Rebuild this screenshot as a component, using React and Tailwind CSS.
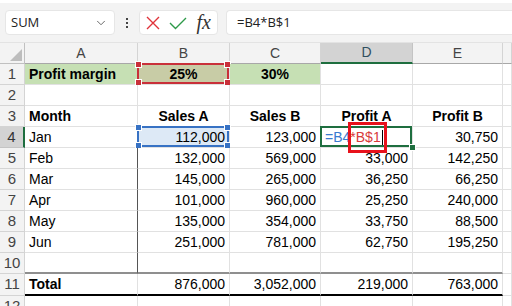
import React from 'react';
import { ChevronDown } from 'lucide-react';

const filas = [
  ['Jan', '112,000', '123,000', null, '30,750'],
  ['Feb', '132,000', '569,000', '33,000', '142,250'],
  ['Mar', '145,000', '265,000', '36,250', '66,250'],
  ['Apr', '101,000', '960,000', '25,250', '240,000'],
  ['May', '135,000', '354,000', '33,750', '88,500'],
  ['Jun', '251,000', '781,000', '62,750', '195,250'],
];

const base = 'relative flex items-center px-[4px] border-r border-b border-[#e1e1e1] whitespace-nowrap';
const rowHead = 'flex items-center justify-center border-r border-b border-[#d4d4d4] bg-[#f3f3f3] text-[#444] text-[15px]';

function Handles({ color }) {
  const h = `absolute w-[5px] h-[5px] ${color} outline outline-1 outline-white`;
  return (
    <>
      <span className={`${h} -left-[3px] -top-[3px]`} />
      <span className={`${h} -right-[3px] -top-[3px]`} />
      <span className={`${h} -left-[3px] -bottom-[3px]`} />
      <span className={`${h} -right-[3px] -bottom-[3px]`} />
    </>
  );
}

function BarraFormula() {
  return (
    <div className="h-[43px] bg-[#f3f3f3] border-t-[3px] border-t-white border-b border-b-[#e3e3e3] flex items-center gap-[8px] pl-[5px] font-['Open_Sans',sans-serif] text-[13px] text-[#222]">
      <div className="w-[110px] h-[25px] bg-white rounded-[4px] border border-[#e6e6e6] flex items-center justify-between pl-[5px] pr-[6px]">
        <span>SUM</span>
        <ChevronDown size={14} strokeWidth={1.5} className="text-[#555]" />
      </div>
      <div className="flex flex-col gap-[2px] w-[8px] items-center">
        <span className="w-[2px] h-[2px] bg-[#444]" />
        <span className="w-[2px] h-[2px] bg-[#444]" />
        <span className="w-[2px] h-[2px] bg-[#444]" />
      </div>
      <div className="w-[79px] h-[25px] bg-white rounded-[4px] border border-[#e6e6e6] flex items-center justify-between px-[6px]">
        <svg width="14" height="14" viewBox="0 0 14 14">
          <path d="M1 1 L13 13 M13 1 L1 13" stroke="#e0333a" strokeWidth="1.4" fill="none" />
        </svg>
        <svg width="18" height="14" viewBox="0 0 18 14">
          <path d="M1 7 L6.5 12.5 L17 2" stroke="#2e9a4a" strokeWidth="1.4" fill="none" />
        </svg>
        <span className="font-['Liberation_Serif',serif] italic text-[20px] text-[#333] leading-none -mt-[2px]">fx</span>
      </div>
      <div className="flex-1 h-[25px] bg-white rounded-l-[4px] border border-r-0 border-[#e6e6e6] flex items-center pl-[10px]">
        =B4*B$1
      </div>
    </div>
  );
}

export default function App() {
  return (
    <div className="w-[512px] h-[306px] overflow-hidden bg-white">
      <BarraFormula />
      <div className="grid grid-cols-[25px_113px_92px_91px_92px_90px_1fr] grid-rows-[21px_repeat(10,21px)_22px_21px] font-['Liberation_Sans',Arial,sans-serif] text-[14px] text-black">
        {/* encabezados de columna */}
        <div className="relative bg-[#f3f3f3] border-r border-b border-[#c0c0c0]">
          <svg className="absolute right-[2px] bottom-[2px]" width="12" height="12" viewBox="0 0 12 12">
            <polygon points="12,0 12,12 0,12" fill="#bdbdbd" />
          </svg>
        </div>
        {['A', 'B', 'C'].map(l => (
          <div key={l} className="flex items-center justify-center bg-[#f3f3f3] border-r border-r-[#d4d4d4] border-b border-b-[#a8a8a8] text-[#444]">{l}</div>
        ))}
        <div className="flex items-center justify-center bg-[#d3d3d3] border-r border-r-[#c4c4c4] border-b-2 border-b-[#1e6e3f] text-[#2f4f5f]">D</div>
        {['E', ''].map(l => (
          <div key={l} className="flex items-center justify-center bg-[#f3f3f3] border-r border-r-[#d4d4d4] border-b border-b-[#a8a8a8] text-[#444]">{l}</div>
        ))}

        {/* fila 1 */}
        <div className={rowHead}>1</div>
        <div className={`${base} bg-[#c6e0b4] font-bold`}>Profit margin</div>
        <div className={`${base} bg-[#c8cca6] font-bold justify-center`}>
          25%
          <span className="absolute -left-[1px] -top-[1px] right-0 bottom-0 border-2 border-[#c9303a]">
            <Handles color="bg-[#c9303a]" />
          </span>
        </div>
        <div className={`${base} bg-[#c6e0b4] font-bold justify-center`}>30%</div>
        <div className={base} />
        <div className={base} />
        <div className={base} />

        {/* fila 2 */}
        <div className={rowHead}>2</div>
        {[0, 1, 2, 3, 4, 5].map(i => <div key={i} className={base} />)}

        {/* fila 3 */}
        <div className={rowHead}>3</div>
        <div className={`${base} font-bold`}>Month</div>
        {['Sales A', 'Sales B', 'Profit A', 'Profit B'].map(t => (
          <div key={t} className={`${base} font-bold justify-center`}>{t}</div>
        ))}
        <div className={base} />

        {/* filas de datos */}
        {filas.map((f, i) => {
          const n = i + 4;
          const activa = n === 4;
          return (
            <React.Fragment key={n}>
              <div className={activa ? 'flex items-center justify-center border-r-2 border-r-[#1e6e3f] border-b border-b-[#c4c4c4] bg-[#d3d3d3] text-[#333] text-[15px]' : rowHead}>{n}</div>
              <div className={`${base} ${activa ? '' : 'border-r-[#555]'}`}>{f[0]}</div>
              <div className={`${base} justify-end ${activa ? 'bg-[#dde9f6]' : ''}`}>
                {f[1]}
                {activa && (
                  <span className="absolute -left-[1px] -top-[1px] right-0 bottom-0 border-2 border-[#3772c4]">
                    <Handles color="bg-[#3772c4]" />
                  </span>
                )}
              </div>
              <div className={`${base} justify-end`}>{f[2]}</div>
              {activa ? (
                <div className={`${base} z-10`}>
                  <span className="absolute -left-[1px] -top-[1px] right-0 bottom-0 border-2 border-[#1e6e3f]" />
                  <span className="absolute -right-[3px] -bottom-[3px] w-[5px] h-[5px] bg-[#1e6e3f] outline outline-1 outline-white" />
                  <span className="text-[#3a7bd0]">=B4</span>
                  <span className="relative text-[#d83a3a]">
                    *B$1
                    <span className="absolute -left-[2px] -right-[6px] -top-[5px] -bottom-[5px] border-[3px] border-[#e8111b]" />
                  </span>
                  <span className="w-px h-[15px] bg-black ml-[1px]" />
                </div>
              ) : (
                <div className={`${base} justify-end`}>{f[3]}</div>
              )}
              <div className={`${base} justify-end`}>{f[4]}</div>
              <div className={base} />
            </React.Fragment>
          );
        })}

        {/* fila 10 */}
        <div className={rowHead}>10</div>
        <div className={`${base} border-r-[#555] border-b-2 border-b-[#8f8f8f]`} />
        {[0, 1, 2, 3].map(i => <div key={i} className={`${base} border-b-2 border-b-[#8f8f8f]`} />)}
        <div className={base} />

        {/* fila 11 */}
        <div className={rowHead}>11</div>
        <div className={`${base} font-bold border-b-2 border-b-black`}>Total</div>
        {['876,000', '3,052,000', '219,000', '763,000'].map(t => (
          <div key={t} className={`${base} justify-end border-b-2 border-b-black`}>{t}</div>
        ))}
        <div className={base} />

        {/* fila 12 */}
        <div className={rowHead}>12</div>
        {[0, 1, 2, 3, 4, 5].map(i => <div key={i} className={base} />)}
      </div>
    </div>
  );
}
